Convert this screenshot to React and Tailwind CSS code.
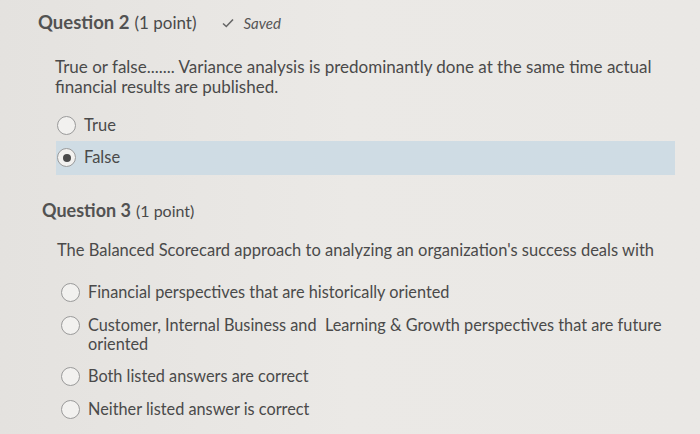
import React from 'react';

const Radio = ({ checked }) => (
  <span className="flex h-[19px] w-[19px] shrink-0 items-center justify-center rounded-full border-[1.5px] border-[#9a9a9a] bg-[#f2f1ef]">
    {checked && <span className="h-[8px] w-[8px] rounded-full bg-[#4a4a4a]"></span>}
  </span>
);

const q3Options = [
  'Financial perspectives that are historically oriented',
  'Customer, Internal Business and  Learning & Growth perspectives that are future oriented',
  'Both listed answers are correct',
  'Neither listed answer is correct',
];

const App = () => {
  return (
    <div className="h-[434px] w-[700px] overflow-hidden bg-gradient-to-r from-[#e4e2df] via-[#ebe9e6] to-[#eae8e5] font-['Lato','Liberation_Sans',sans-serif] text-[#4a4a4a]">
      {/* Question 2 */}
      <div className="pl-[38px] pt-[9px]">
        <div className="flex items-baseline">
          <span className="text-[18.5px] font-bold text-[#525252]">Question 2</span>
          <span className="ml-[5px] text-[17px]">(1 point)</span>
          <span className="ml-[26px] flex items-baseline text-[15px] italic text-[#555]">
            <svg width="12" height="10" viewBox="0 0 12 10" className="mr-[9px] self-center">
              <path d="M1 5.5 L4.3 8.5 L11 1.5" fill="none" stroke="#666" strokeWidth="1.6" />
            </svg>
            Saved
          </span>
        </div>
        <p className="ml-[17px] mt-[20px] w-[615px] text-[17px] leading-[20px]">
          True or false....... Variance analysis is predominantly done at the same time actual financial results are published.
        </p>
        <div className="mt-[16px] flex flex-col">
          <label className="ml-[19px] flex h-[26px] items-center gap-[8px] text-[16.5px]">
            <Radio />
            True
          </label>
          <label className="ml-[18px] mr-[25px] mt-[2px] flex h-[34px] items-center gap-[8px] bg-[#cfdce4] pl-[1px] text-[16.5px]">
            <Radio checked />
            False
          </label>
        </div>
      </div>

      {/* Question 3 */}
      <div className="pl-[42px] pt-[22px]">
        <div className="flex items-baseline">
          <span className="text-[18px] font-bold text-[#525252]">Question 3</span>
          <span className="ml-[5px] text-[16px]">(1 point)</span>
        </div>
        <p className="ml-[15px] mt-[16px] text-[16.5px] leading-[20px]">
          The Balanced Scorecard approach to analyzing an organization's success deals with
        </p>
        <div className="ml-[19px] mt-[22px] flex flex-col gap-[13px]">
          {q3Options.map((opt, i) => (
            <label key={i} className="flex items-start gap-[8px] text-[16.3px] leading-[19px]">
              <span className="mt-[1px]"><Radio /></span>
              <span className="w-[590px] whitespace-pre-wrap">{opt}</span>
            </label>
          ))}
        </div>
      </div>
    </div>
  );
};

export default App;
